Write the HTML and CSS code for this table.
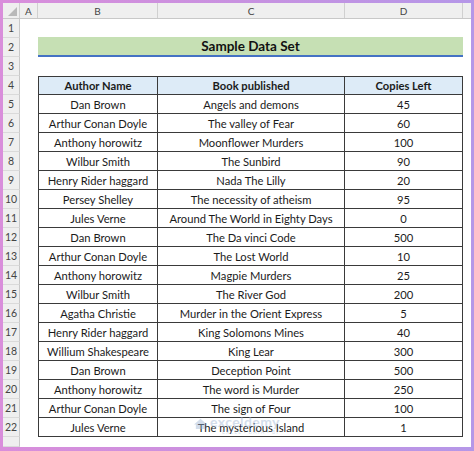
FILE: index.html
```html
<!DOCTYPE html>
<html>
<head>
<meta charset="utf-8">
<link rel="stylesheet" href="styles.css">
</head>
<body>
<div class="frame">
  <div class="sheet">
    <div class="row colhead">
      <div class="corner"><svg width="10" height="10" viewBox="0 0 10 10"><polygon points="10,1 10,10 1,10" fill="#b9b9b9"/></svg></div>
      <div class="ch">A</div><div class="ch">B</div><div class="ch">C</div><div class="ch">D</div><div class="ch last"></div>
    </div>
    <div class="row"><div class="rh">1</div><div></div><div class="span3"></div><div></div></div>
    <div class="row"><div class="rh">2</div><div></div><div class="span3 title">Sample Data Set</div><div></div></div>
    <div class="row"><div class="rh">3</div><div></div><div class="span3"></div><div></div></div>
    <div class="row"><div class="rh">4</div><div></div><div class="c hd first top">Author Name</div><div class="c hd top">Book published</div><div class="c hd top">Copies Left</div><div></div></div>
    <div class="row"><div class="rh">5</div><div></div><div class="c first">Dan Brown</div><div class="c">Angels and demons</div><div class="c">45</div><div></div></div>
    <div class="row"><div class="rh">6</div><div></div><div class="c first">Arthur Conan Doyle</div><div class="c">The valley of Fear</div><div class="c">60</div><div></div></div>
    <div class="row"><div class="rh">7</div><div></div><div class="c first">Anthony horowitz</div><div class="c">Moonflower Murders</div><div class="c">100</div><div></div></div>
    <div class="row"><div class="rh">8</div><div></div><div class="c first">Wilbur Smith</div><div class="c">The Sunbird</div><div class="c">90</div><div></div></div>
    <div class="row"><div class="rh">9</div><div></div><div class="c first">Henry Rider haggard</div><div class="c">Nada The Lilly</div><div class="c">20</div><div></div></div>
    <div class="row"><div class="rh">10</div><div></div><div class="c first">Persey Shelley</div><div class="c">The necessity of atheism</div><div class="c">95</div><div></div></div>
    <div class="row"><div class="rh">11</div><div></div><div class="c first">Jules Verne</div><div class="c">Around The World in Eighty Days</div><div class="c">0</div><div></div></div>
    <div class="row"><div class="rh">12</div><div></div><div class="c first">Dan Brown</div><div class="c">The Da vinci Code</div><div class="c">500</div><div></div></div>
    <div class="row"><div class="rh">13</div><div></div><div class="c first">Arthur Conan Doyle</div><div class="c">The Lost World</div><div class="c">10</div><div></div></div>
    <div class="row"><div class="rh">14</div><div></div><div class="c first">Anthony horowitz</div><div class="c">Magpie Murders</div><div class="c">25</div><div></div></div>
    <div class="row"><div class="rh">15</div><div></div><div class="c first">Wilbur Smith</div><div class="c">The River God</div><div class="c">200</div><div></div></div>
    <div class="row"><div class="rh">16</div><div></div><div class="c first">Agatha Christie</div><div class="c">Murder in the Orient Express</div><div class="c">5</div><div></div></div>
    <div class="row"><div class="rh">17</div><div></div><div class="c first">Henry Rider haggard</div><div class="c">King Solomons Mines</div><div class="c">40</div><div></div></div>
    <div class="row"><div class="rh">18</div><div></div><div class="c first">Willium Shakespeare</div><div class="c">King Lear</div><div class="c">300</div><div></div></div>
    <div class="row"><div class="rh">19</div><div></div><div class="c first">Dan Brown</div><div class="c">Deception Point</div><div class="c">500</div><div></div></div>
    <div class="row"><div class="rh">20</div><div></div><div class="c first">Anthony horowitz</div><div class="c">The word is Murder</div><div class="c">250</div><div></div></div>
    <div class="row"><div class="rh">21</div><div></div><div class="c first">Arthur Conan Doyle</div><div class="c">The sign of Four</div><div class="c">100</div><div></div></div>
    <div class="row"><div class="rh">22</div><div></div><div class="c first">Jules Verne</div><div class="c">The mysterious Island</div><div class="c">1</div><div></div></div>
    <div class="row tail"><div class="rh"></div><div></div><div class="span3"></div><div></div></div>
    <div class="watermark">
      <svg width="15" height="13" viewBox="0 0 16 14"><path d="M1 8 L8 2 L15 8 L13 8 L13 13 L3 13 L3 8 Z" fill="#9fb6d4"/></svg>
      <div class="wm-text"><span class="wm-name">exceldemy</span><span class="wm-sub">EXCEL · DATA · BI</span></div>
    </div>
  </div>
</div>
</body>
</html>
```
FILE: styles.css
```css
html, body { margin: 0; padding: 0; }
body { width: 474px; height: 451px; overflow: hidden; background: #fff; }
.frame {
  width: 474px; height: 451px; box-sizing: border-box;
  padding: 3px 3px 4px 3px;
  background: linear-gradient(90deg, #d98edb 0%, #c891e0 50%, #b597e8 100%);
}
.sheet {
  position: relative;
  width: 468px; height: 444px; background: #fff; overflow: hidden;
  font-family: "Lato", "Liberation Sans", sans-serif;
  color: #1b1b1b;
}
.row {
  display: grid;
  grid-template-columns: 17px 18px 120px 187px 118px 8px;
  height: 19px;
}
.row > div { box-sizing: border-box; }
.span3 { grid-column: span 3; }
.colhead { height: 16px; background: #efefef; border-bottom: 1px solid #c8c8c8; box-sizing: border-box; }
.corner { display: flex; align-items: flex-end; justify-content: flex-end; padding: 0 2px 2px 0; border-right: 1px solid #d0d0d0; }
.ch {
  font-size: 10px; color: #444; display: flex; align-items: center; justify-content: center;
  border-right: 1px solid #d0d0d0;
}
.ch.last { border-right: none; }
.rh {
  background: #efefef; border-right: 1px solid #c8c8c8; border-bottom: 1px solid #dadada;
  font-size: 10.5px; color: #444; display: flex; align-items: center; justify-content: center;
}
.tail { height: 10px; }
.title {
  background: #c6e0b4; border-bottom: 2px solid #4472c4;
  margin-top: -1px; height: 20px;
  font-weight: 700; font-size: 13.5px; color: #111;
  display: flex; align-items: center; justify-content: center;
}
.c {
  border-right: 1px solid #3a3a3a; border-bottom: 1px solid #3a3a3a;
  font-size: 11.2px; display: flex; align-items: center; justify-content: center;
  white-space: nowrap;
}
.c.first { border-left: 1px solid #3a3a3a; }
.c.top { border-top: 1px solid #3a3a3a; }
.hd { background: #ddebf7; font-weight: 700; }
.watermark {
  position: absolute; left: 190px; top: 412px;
  display: flex; align-items: flex-start; gap: 2px; opacity: 0.45;
  pointer-events: none;
}
.watermark svg { margin-top: 2px; }
.wm-text { display: flex; flex-direction: column; line-height: 1; }
.wm-name { font-size: 14px; color: #9fb6d4; font-weight: 700; letter-spacing: 0.4px; }
.wm-sub { font-size: 5px; color: #9fb6d4; letter-spacing: 1px; margin-left: 12px; margin-top: 1px; }
```
